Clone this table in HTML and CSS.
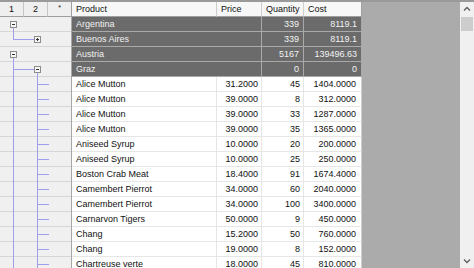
FILE: index.html
```html
<!DOCTYPE html>
<html>
<head>
<meta charset="utf-8">
<link rel="stylesheet" href="styles.css">
</head>
<body>
<div class="frame">
  <div class="grid">
    <div class="row header">
      <div class="hc center">1</div>
      <div class="hc center">2</div>
      <div class="hc center star">*</div>
      <div class="hc col">Product</div>
      <div class="hc col">Price</div>
      <div class="hc col">Quantity</div>
      <div class="hc col">Cost</div>
    </div>

    <div class="row group">
      <div class="tree"><svg width="72" height="15"><line class="sep" x1="0" y1="14.5" x2="72" y2="14.5"/><line class="tl" x1="13.5" y1="11" x2="13.5" y2="15"/><rect class="box" x="10.5" y="4.5" width="6" height="6"/><line class="sign" x1="12" y1="7.5" x2="15" y2="7.5"/></svg></div>
      <div class="name">Argentina</div>
      <div class="num">339</div>
      <div class="num">8119.1</div>
    </div>
    <div class="row group">
      <div class="tree"><svg width="72" height="15"><line class="sep" x1="0" y1="14.5" x2="72" y2="14.5"/><line class="tl" x1="13.5" y1="0" x2="13.5" y2="8"/><line class="tl" x1="13" y1="7.5" x2="34" y2="7.5"/><rect class="box" x="34.5" y="4.5" width="6" height="6"/><line class="sign" x1="36" y1="7.5" x2="39" y2="7.5"/><line class="sign" x1="37.5" y1="6" x2="37.5" y2="9"/></svg></div>
      <div class="name">Buenos Aires</div>
      <div class="num">339</div>
      <div class="num">8119.1</div>
    </div>
    <div class="row group">
      <div class="tree"><svg width="72" height="15"><line class="sep" x1="0" y1="14.5" x2="72" y2="14.5"/><line class="tl" x1="13.5" y1="11" x2="13.5" y2="15"/><rect class="box" x="10.5" y="4.5" width="6" height="6"/><line class="sign" x1="12" y1="7.5" x2="15" y2="7.5"/></svg></div>
      <div class="name">Austria</div>
      <div class="num">5167</div>
      <div class="num">139496.63</div>
    </div>
    <div class="row group">
      <div class="tree"><svg width="72" height="15"><line class="sep" x1="0" y1="14.5" x2="72" y2="14.5"/><line class="tl" x1="13.5" y1="0" x2="13.5" y2="15"/><line class="tl" x1="13" y1="7.5" x2="34" y2="7.5"/><line class="tl" x1="37.5" y1="11" x2="37.5" y2="15"/><rect class="box" x="34.5" y="4.5" width="6" height="6"/><line class="sign" x1="36" y1="7.5" x2="39" y2="7.5"/></svg></div>
      <div class="name">Graz</div>
      <div class="num">0</div>
      <div class="num">0</div>
    </div>

    <div class="row item"><div class="tree leaf"></div><div class="txt">Alice Mutton</div><div class="num">31.2000</div><div class="num">45</div><div class="num">1404.0000</div></div>
    <div class="row item"><div class="tree leaf"></div><div class="txt">Alice Mutton</div><div class="num">39.0000</div><div class="num">8</div><div class="num">312.0000</div></div>
    <div class="row item"><div class="tree leaf"></div><div class="txt">Alice Mutton</div><div class="num">39.0000</div><div class="num">33</div><div class="num">1287.0000</div></div>
    <div class="row item"><div class="tree leaf"></div><div class="txt">Alice Mutton</div><div class="num">39.0000</div><div class="num">35</div><div class="num">1365.0000</div></div>
    <div class="row item"><div class="tree leaf"></div><div class="txt">Aniseed Syrup</div><div class="num">10.0000</div><div class="num">20</div><div class="num">200.0000</div></div>
    <div class="row item"><div class="tree leaf"></div><div class="txt">Aniseed Syrup</div><div class="num">10.0000</div><div class="num">25</div><div class="num">250.0000</div></div>
    <div class="row item"><div class="tree leaf"></div><div class="txt">Boston Crab Meat</div><div class="num">18.4000</div><div class="num">91</div><div class="num">1674.4000</div></div>
    <div class="row item"><div class="tree leaf"></div><div class="txt">Camembert Pierrot</div><div class="num">34.0000</div><div class="num">60</div><div class="num">2040.0000</div></div>
    <div class="row item"><div class="tree leaf"></div><div class="txt">Camembert Pierrot</div><div class="num">34.0000</div><div class="num">100</div><div class="num">3400.0000</div></div>
    <div class="row item"><div class="tree leaf"></div><div class="txt">Carnarvon Tigers</div><div class="num">50.0000</div><div class="num">9</div><div class="num">450.0000</div></div>
    <div class="row item"><div class="tree leaf"></div><div class="txt">Chang</div><div class="num">15.2000</div><div class="num">50</div><div class="num">760.0000</div></div>
    <div class="row item"><div class="tree leaf"></div><div class="txt">Chang</div><div class="num">19.0000</div><div class="num">8</div><div class="num">152.0000</div></div>
    <div class="row item"><div class="tree leaf"></div><div class="txt">Chartreuse verte</div><div class="num">18.0000</div><div class="num">45</div><div class="num">810.0000</div></div>
  </div>
  <div class="scrollbar">
    <div class="arrow up"><svg width="14" height="14"><path d="M4 8.5 L7 5.5 L10 8.5" /></svg></div>
    <div class="thumb"></div>
    <div class="track"></div>
    <div class="arrow down"><svg width="14" height="14"><path d="M4 5.5 L7 8.5 L10 5.5" /></svg></div>
  </div>
</div>
</body>
</html>
```
FILE: styles.css
```css
html, body {
  margin: 0;
  padding: 0;
  width: 474px;
  height: 268px;
  overflow: hidden;
  background: #ababab;
}
.frame {
  display: flex;
  height: 268px;
  border-top: 2px solid #9a9a9a;
  box-sizing: border-box;
  font-family: "Liberation Sans", Arial, sans-serif;
  font-size: 9px;
  color: #111111;
}
.grid {
  flex: 1;
  background: #ababab;
  overflow: hidden;
}
.row {
  display: grid;
  grid-template-columns: 24px 24px 24px 145px 45px 42px 58px;
  width: 363px;
  height: 15px;
}
.row > div {
  box-sizing: border-box;
  height: 15px;
  line-height: 14px;
  white-space: nowrap;
  overflow: hidden;
}
/* header */
.header > .hc {
  background: #f7f7f7;
  border-bottom: 1px solid #9f9f9f;
  border-right: 1px solid #cfcfcf;
}
.header > .center {
  background: #efefef;
  text-align: center;
  border-right: 1px solid #c4c4c4;
}
.header > .star {
  font-size: 7px;
  line-height: 11px;
}
.header > .col {
  padding-left: 4px;
}
.header > .hc:nth-child(3) {
  border-right: 1px solid #9f9f9f;
}
.header > .hc:last-child {
  border-right: 1px solid #9f9f9f;
}
/* tree area */
.tree {
  grid-column: span 3;
  background: #f0f0f0;
  border-right: 1px solid #a8a8a8;
}
.tree svg {
  display: block;
}
.tree .sep {
  stroke: #d6d6d6;
  stroke-width: 1;
}
.tree .tl {
  stroke: #9e9eec;
  stroke-width: 1;
}
.tree .box {
  fill: #f7f7f7;
  stroke: #8c8c8c;
  stroke-width: 1;
}
.tree .sign {
  stroke: #333333;
  stroke-width: 1;
}
.tree.leaf {
  background:
    linear-gradient(#9e9eec, #9e9eec) 13px 0 / 1px 15px no-repeat,
    linear-gradient(#9e9eec, #9e9eec) 37px 0 / 1px 15px no-repeat,
    linear-gradient(#9e9eec, #9e9eec) 37px 7px / 12px 1px no-repeat,
    linear-gradient(#d6d6d6, #d6d6d6) 0 14px / 72px 1px no-repeat,
    #f0f0f0;
}
/* group rows */
.group > .name,
.group > .num {
  background: #6b6b6b;
  color: #f2f2f2;
  border-bottom: 1px solid #a9a9a9;
}
.group > .name {
  grid-column: span 2;
  padding-left: 4px;
  border-right: 1px solid #a9a9a9;
}
.group > .num {
  text-align: right;
  padding-right: 4px;
  border-right: 1px solid #a9a9a9;
}
/* item rows */
.item > .txt,
.item > .num {
  background: #ffffff;
  border-bottom: 1px solid #e6e6e6;
  border-right: 1px solid #e6e6e6;
}
.item > .txt {
  padding-left: 4px;
}
.item > .num {
  text-align: right;
  padding-right: 3px;
}
.item > .num:last-child {
  padding-right: 5px;
  border-right: 1px solid #d0d0d0;
}
/* scrollbar */
.scrollbar {
  width: 14px;
  flex: none;
  background: #f0f0f0;
  display: flex;
  flex-direction: column;
}
.scrollbar .arrow {
  height: 14px;
  flex: none;
}
.scrollbar .arrow svg {
  display: block;
}
.scrollbar .arrow path {
  fill: none;
  stroke: #606060;
  stroke-width: 1.3;
}
.scrollbar .thumb {
  height: 14px;
  margin: 1px 1px 0 1px;
  background: #cdcdcd;
  flex: none;
}
.scrollbar .track {
  flex: 1;
}
```
